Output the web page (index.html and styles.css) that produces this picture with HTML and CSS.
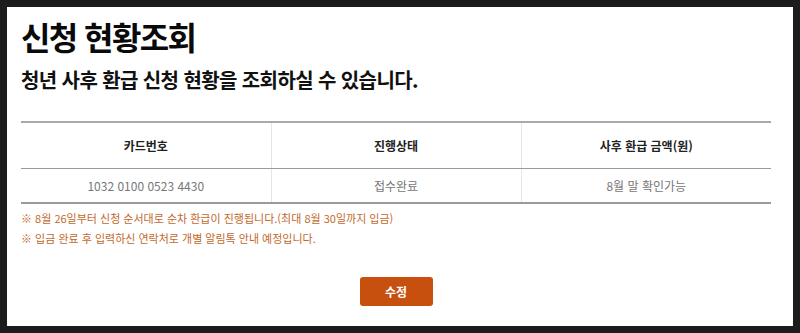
FILE: index.html
```html
<!DOCTYPE html>
<html lang="ko">
<head>
<meta charset="utf-8">
<title>신청 현황조회</title>
<link rel="stylesheet" href="styles.css">
</head>
<body>
<div class="panel">
  <div class="content">
    <h1 class="title">신청 현황조회</h1>
    <p class="subtitle">청년 사후 환급 신청 현황을 조회하실 수 있습니다.</p>
    <table class="status">
      <thead>
        <tr><th>카드번호</th><th>진행상태</th><th>사후 환급 금액(원)</th></tr>
      </thead>
      <tbody>
        <tr><td>1032 0100 0523 4430</td><td>접수완료</td><td>8월 말 확인가능</td></tr>
      </tbody>
    </table>
    <ul class="notes">
      <li>※ 8월 26일부터 신청 순서대로 순차 환급이 진행됩니다.(최대 8월 30일까지 입금)</li>
      <li>※ 입금 완료 후 입력하신 연락처로 개별 알림톡 안내 예정입니다.</li>
    </ul>
    <div class="actions"><button class="btn" type="button">수정</button></div>
  </div>
</div>
</body>
</html>
```
FILE: styles.css
```css
html, body {
  margin: 0;
  padding: 0;
}
body {
  background: #1c1c1c;
  padding: 7px;
  font-family: "Noto Sans CJK KR", "Noto Sans", sans-serif;
  color: #111;
}
.panel {
  background: #fff;
  height: 319px;
  box-sizing: border-box;
  padding: 0 0 0 14px;
  overflow: hidden;
}
.content {
  width: 750px;
}
.title {
  margin: 0;
  padding-top: 7px;
  font-size: 32px;
  line-height: 44px;
  font-weight: 700;
  letter-spacing: -1.6px;
  color: #0a0a0a;
}
.subtitle {
  margin: 8px 0 0;
  font-size: 20px;
  line-height: 28px;
  font-weight: 700;
  letter-spacing: -0.6px;
  color: #111;
}
.status {
  width: 750px;
  margin-top: 27px;
  border-collapse: collapse;
  table-layout: fixed;
  border-top: 2px solid #a9a9a9;
  border-bottom: 2px solid #9a9a9a;
}
.status th, .status td {
  text-align: center;
  padding: 0;
  border-left: 1px solid #e6e6e6;
}
.status th:first-child, .status td:first-child {
  border-left: none;
}
.status th {
  height: 45px;
  font-size: 12px;
  font-weight: 700;
  color: #222;
  border-bottom: 1px solid #9a9a9a;
}
.status td {
  height: 33px;
  font-size: 12px;
  font-weight: 400;
  color: #777;
}
.notes {
  list-style: none;
  margin: 4px 0 0;
  padding: 0;
  font-size: 11px;
  line-height: 20px;
  color: #c2692c;
}
.actions {
  display: flex;
  justify-content: center;
  margin-top: 29px;
}
.btn {
  width: 73px;
  height: 29px;
  border: none;
  border-radius: 3px;
  background: #c8500f;
  color: #fff;
  font-family: inherit;
  font-size: 12px;
  font-weight: 700;
  padding: 0;
}
```
